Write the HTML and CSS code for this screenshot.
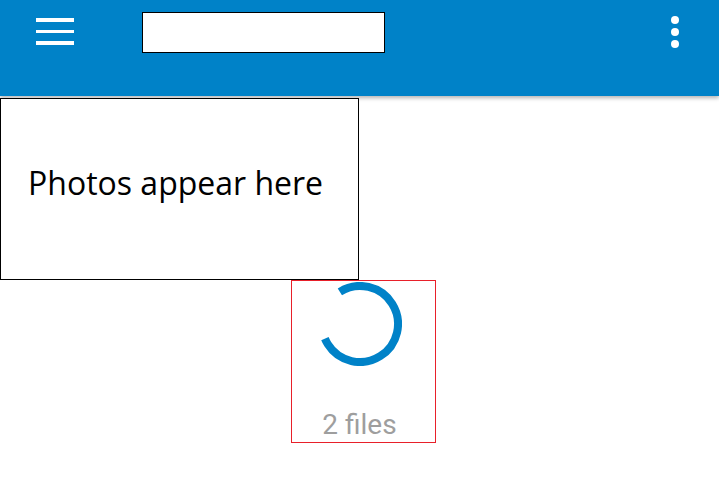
FILE: index.html
```html
<!DOCTYPE html>
<html lang="en">
<head>
    <meta charset="UTF-8">
    <meta name="viewport" content="width=device-width, initial-scale=1.0">
    <title>Photos</title>
    <link rel="stylesheet" href="styles.css">
</head>
<body>
    <div class="toolbar">
        <button class="menu-button" aria-label="Menu">
            <span></span><span></span><span></span>
        </button>
        <div class="title-box"></div>
        <button class="more-button" aria-label="More">
            <span></span><span></span><span></span>
        </button>
    </div>
    <div class="photos">Photos appear here</div>
    <div class="upload">
        <svg class="spinner" width="84" height="84" viewBox="0 0 84 84">
            <circle cx="42" cy="42" r="38" fill="none" stroke="#0082c8" stroke-width="8"
                    stroke-dasharray="185 54" transform="rotate(-122 42 42)"/>
        </svg>
        <div class="count">2 files</div>
    </div>
</body>
</html>
```

FILE: styles.css
```css
body {
    margin: 0;
    padding: 0;
    background-color: white;
    font-family: Roboto, Arial, sans-serif;
}
.toolbar {
    position: relative;
    height: 96px;
    background-color: #0082c8;
    box-shadow: 0 2px 4px rgba(0, 0, 0, 0.3);
    display: flex;
    align-items: flex-start;
}
.menu-button {
    background: none;
    border: none;
    padding: 0;
    margin: 18px 0 0 36px;
    width: 38px;
    display: flex;
    flex-direction: column;
    gap: 8px;
}
.menu-button span {
    display: block;
    height: 3.5px;
    background-color: white;
}
.title-box {
    margin: 12px 0 0 68px;
    width: 241px;
    height: 39px;
    background-color: white;
    border: 1px solid black;
}
.more-button {
    background: none;
    border: none;
    padding: 0;
    margin: 16px 40px 0 auto;
    display: flex;
    flex-direction: column;
    gap: 4px;
}
.more-button span {
    display: block;
    width: 8px;
    height: 8px;
    border-radius: 50%;
    background-color: white;
}
.photos {
    position: relative;
    margin-top: 2px;
    width: 330px;
    height: 118px;
    padding: 62px 0 0 27px;
    border: 1px solid black;
    background-color: white;
    font-family: "Open Sans", sans-serif;
    font-size: 32px;
    color: black;
    white-space: nowrap;
}
.upload {
    margin-left: 291px;
    width: 135px;
    height: 161px;
    padding-right: 8px;
    border: 1px solid #e8202a;
    display: flex;
    flex-direction: column;
    align-items: center;
}
.spinner {
    margin-top: 1px;
}
.count {
    margin-top: 42px;
    font-size: 28px;
    color: #9e9e9e;
}
```
